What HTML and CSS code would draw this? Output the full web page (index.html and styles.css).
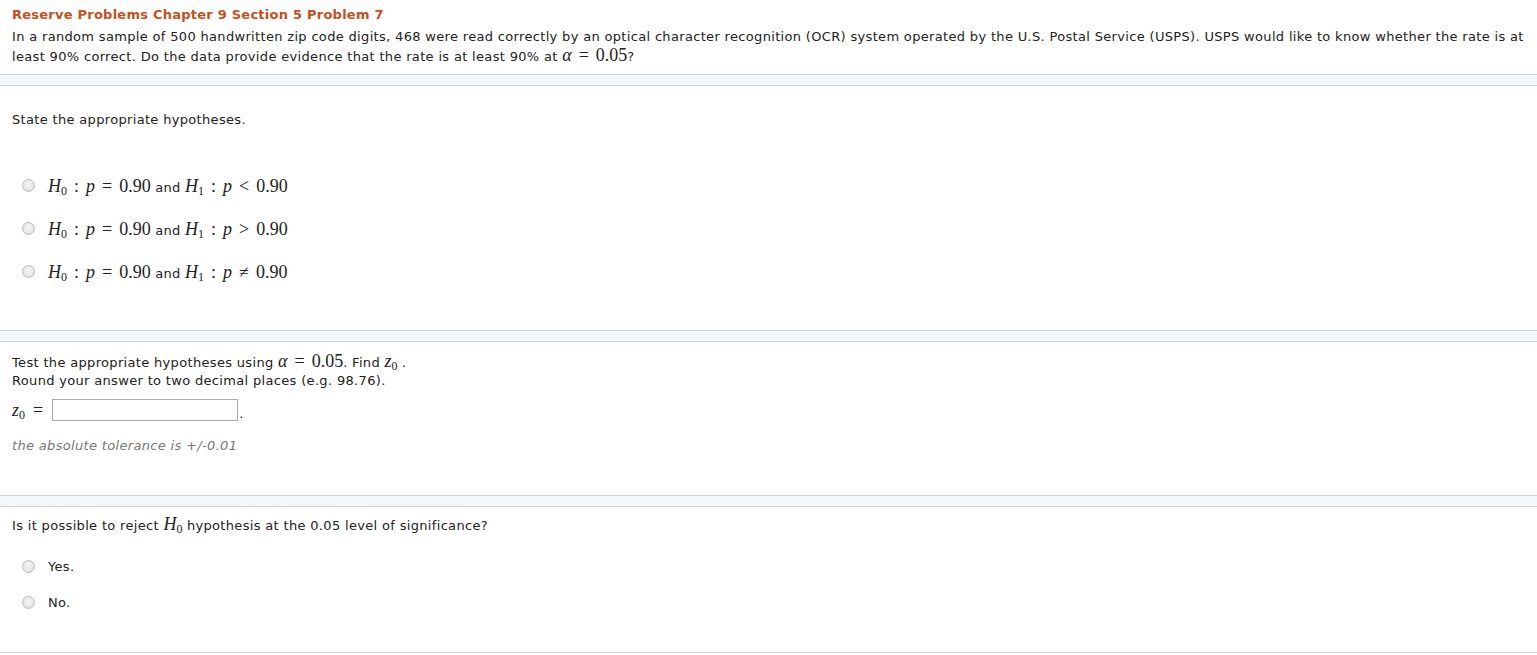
FILE: index.html
```html
<!DOCTYPE html>
<html>
<head>
<meta charset="utf-8">
<link rel="stylesheet" href="styles.css">
</head>
<body>
<div class="page">
  <section class="intro">
    <h1 class="title">Reserve Problems Chapter 9 Section 5 Problem 7</h1>
    <p class="text">In a random sample of 500 handwritten zip code digits, 468 were read correctly by an optical character recognition (OCR) system operated by the U.S. Postal Service (USPS). USPS would like to know whether the rate is at least 90% correct. Do the data provide evidence that the rate is at least 90% at <span class="m"><i>α</i><span class="op">=</span>0.05</span>?</p>
  </section>
  <div class="band"></div>

  <section class="part part-hyp">
    <p class="text">State the appropriate hypotheses.</p>
    <ul class="choices choices-hyp">
      <li><span class="radio"></span><span class="label"><span class="m"><i>H</i><sub>0</sub><span class="op">:</span><i>p</i><span class="op">=</span>0.90</span> and <span class="m"><i>H</i><sub>1</sub><span class="op">:</span><i>p</i><span class="op">&lt;</span>0.90</span></span></li>
      <li><span class="radio"></span><span class="label"><span class="m"><i>H</i><sub>0</sub><span class="op">:</span><i>p</i><span class="op">=</span>0.90</span> and <span class="m"><i>H</i><sub>1</sub><span class="op">:</span><i>p</i><span class="op">&gt;</span>0.90</span></span></li>
      <li><span class="radio"></span><span class="label"><span class="m"><i>H</i><sub>0</sub><span class="op">:</span><i>p</i><span class="op">=</span>0.90</span> and <span class="m"><i>H</i><sub>1</sub><span class="op">:</span><i>p</i><span class="op">≠</span>0.90</span></span></li>
    </ul>
  </section>
  <div class="band"></div>

  <section class="part part-test">
    <p class="text">Test the appropriate hypotheses using <span class="m"><i>α</i><span class="op">=</span>0.05</span>. Find <span class="m"><i>z</i><sub>0</sub></span> .<br>Round your answer to two decimal places (e.g. 98.76).</p>
    <div class="answer"><span class="m"><i>z</i><sub>0</sub><span class="op">=</span></span><span class="box"></span><span class="dot">.</span></div>
    <p class="tol">the absolute tolerance is +/-0.01</p>
  </section>
  <div class="band"></div>

  <section class="part part-rej">
    <p class="text">Is it possible to reject <span class="m"><i>H</i><sub>0</sub></span> hypothesis at the 0.05 level of significance?</p>
    <ul class="choices choices-yn">
      <li><span class="radio"></span><span class="label">Yes.</span></li>
      <li><span class="radio"></span><span class="label">No.</span></li>
    </ul>
  </section>
  <div class="endline"></div>
</div>
</body>
</html>
```

FILE: styles.css
```css
* { box-sizing: border-box; }
html, body { margin: 0; padding: 0; background: #fff; }
body {
  font-family: "DejaVu Sans", Verdana, sans-serif;
  font-size: 13px;
  letter-spacing: 0.33px;
  color: #222;
  width: 1537px;
  overflow: hidden;
}
.page { display: flex; flex-direction: column; }
p, h1, ul { margin: 0; padding: 0; }
.intro { padding: 6px 6px 8px 12px; }
.title {
  font-size: 13px;
  font-weight: bold;
  letter-spacing: 0.24px;
  color: #c4501c;
  line-height: 18px;
  margin-bottom: 4px;
}
.text { line-height: 18px; }
.m {
  font-family: "Liberation Serif", "Times New Roman", serif;
  font-size: 18px;
  line-height: 1;
  letter-spacing: 0;
  white-space: nowrap;
}
.m i { font-style: italic; }
.m sub { font-size: 12px; vertical-align: -3px; line-height: 0; }
.op { margin: 0 7px; }
.band {
  height: 12px;
  border-top: 1px solid #cfd3d8;
  border-bottom: 1px solid #cfd3d8;
  background: #f3f7fa;
}
.part { padding: 0 12px; }
.part-hyp { padding-top: 25px; height: 244px; }
.choices { list-style: none; }
.choices li { display: flex; align-items: center; }
.label { white-space: nowrap; }
.choices-hyp { margin-top: 35px; }
.choices-hyp li { height: 43px; }
.radio {
  width: 13px;
  height: 13px;
  border-radius: 50%;
  border: 1px solid #bdbdbd;
  background: radial-gradient(circle at 50% 40%, #f7f7f7 0%, #e6e6e6 60%, #d4d4d4 100%);
  margin-left: 10px;
  margin-right: 13px;
  flex: none;
}
.part-test { padding-top: 10px; height: 153px; }
.answer { display: flex; align-items: center; margin-top: 9px; height: 22px; }
.answer .m .op { margin-left: 8px; margin-right: 9px; }
.box {
  width: 186px;
  height: 22px;
  border: 1px solid #a9a9a9;
  background: #fff;
}
.dot { align-self: flex-end; margin-left: 1px; line-height: 14px; }
.tol { color: #777; font-style: italic; margin-top: 16px; line-height: 18px; }
.part-rej { padding-top: 8px; height: 145px; }
.choices-yn { margin-top: 13px; }
.choices-yn li { height: 36px; }
.endline { height: 1px; background: #cfd3d8; }
```
